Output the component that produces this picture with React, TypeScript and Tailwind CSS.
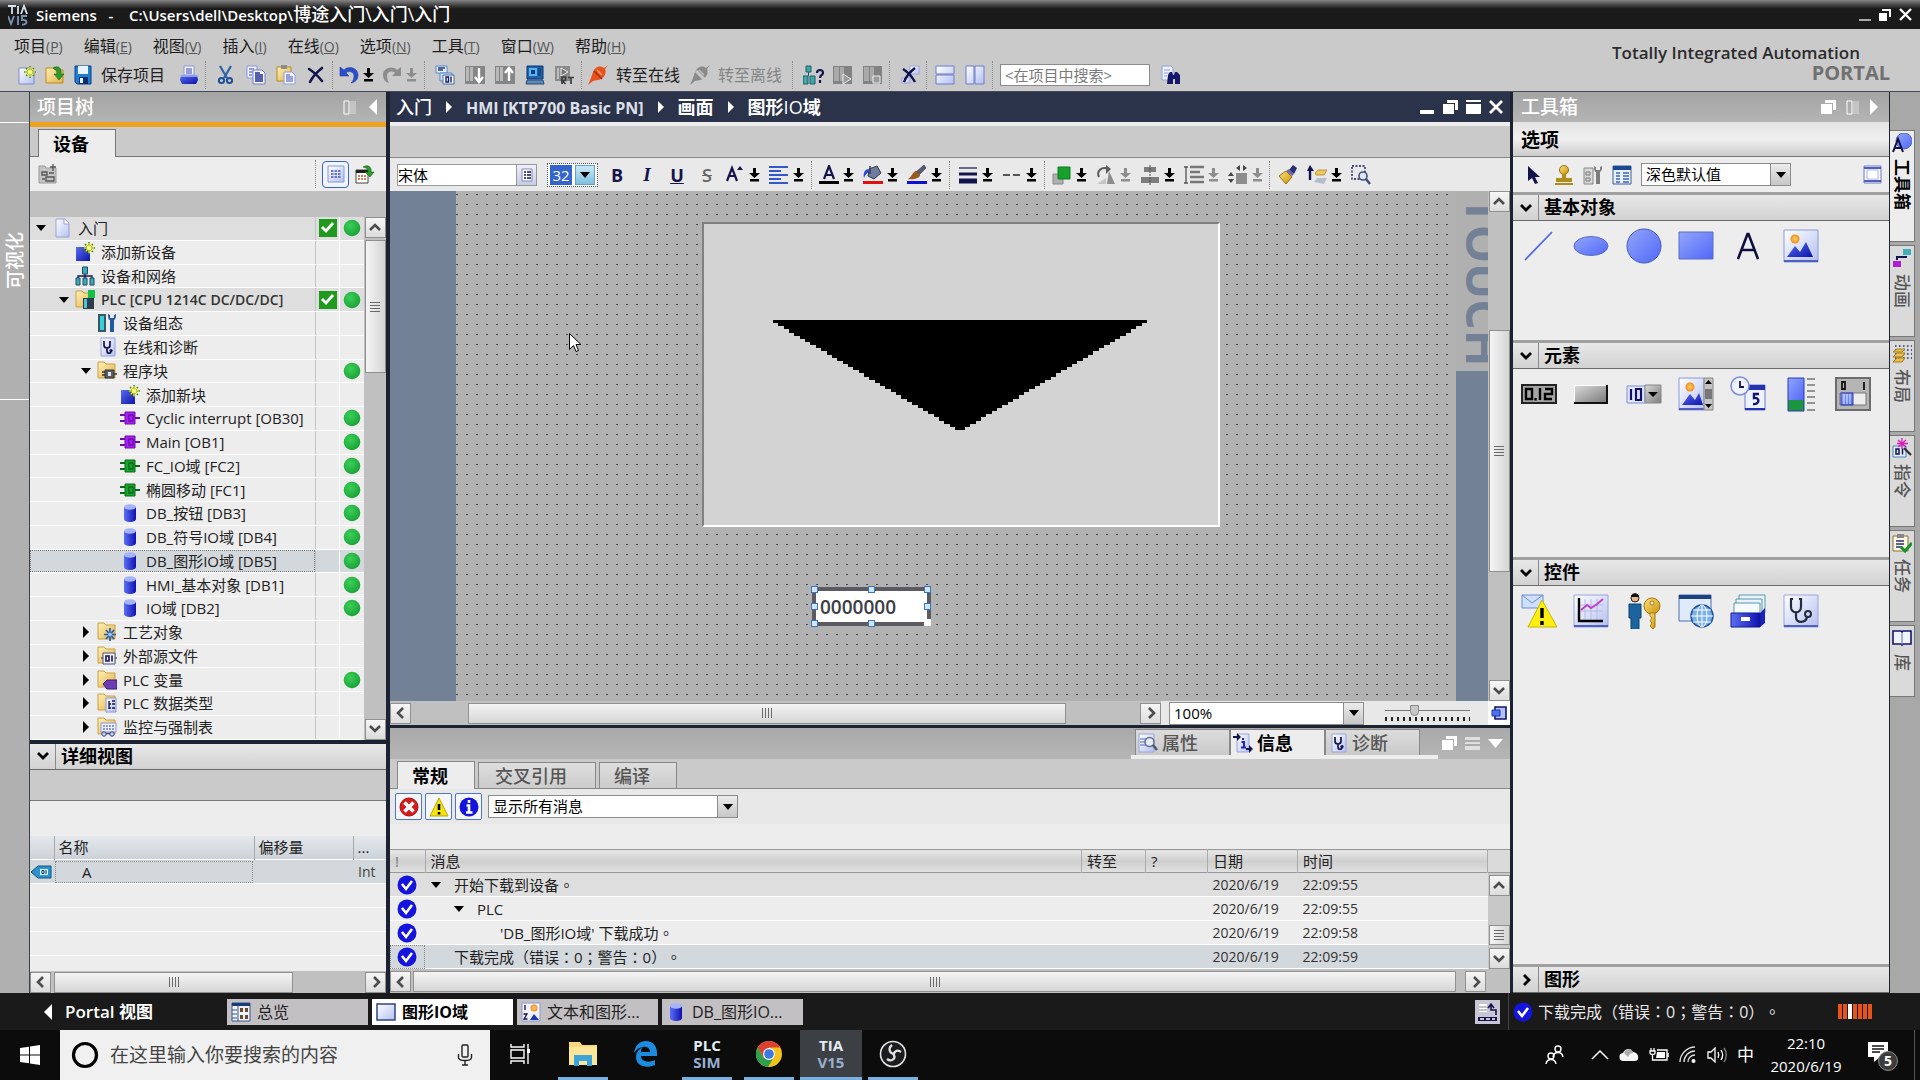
import React from 'react';
import clsx from 'clsx';

type Kids = { children?: React.ReactNode };

/* ---------- drawing helpers ---------- */
const Svg = ({ w = 20, h = 20, vb, children }: Kids & { w?: number; h?: number; vb?: string }) => (
  <svg width={w} height={h} viewBox={vb ?? `0 0 ${w} ${h}`} fill="none" className="block shrink-0" aria-hidden="true">
    {children}
  </svg>
);

const Defs = () => (
  <svg width="0" height="0" className="absolute" aria-hidden="true">
    <defs>
      <linearGradient id="blue" x1="0" y1="0" x2="1" y2="1"><stop offset="0" stopColor="#94a6fb" /><stop offset="1" stopColor="#5068f8" /></linearGradient>
      <linearGradient id="deep" x1="0" y1="0" x2="1" y2="1"><stop offset="0" stopColor="#5a6cf0" /><stop offset="1" stopColor="#0c14a8" /></linearGradient>
      <linearGradient id="pale" x1="0" y1="0" x2="1" y2="1"><stop offset="0" stopColor="#ffffff" /><stop offset="1" stopColor="#b4c0f0" /></linearGradient>
      <linearGradient id="folder" x1="0" y1="0" x2="1" y2="1"><stop offset="0" stopColor="#fff0b8" /><stop offset="1" stopColor="#e2b24a" /></linearGradient>
      <linearGradient id="metal" x1="0" y1="0" x2="1" y2="1"><stop offset="0" stopColor="#d8d8d8" /><stop offset="1" stopColor="#7c7c7c" /></linearGradient>
      <linearGradient id="cyl" x1="0" y1="0" x2="1" y2="0"><stop offset="0" stopColor="#5a70f4" /><stop offset="1" stopColor="#1010b0" /></linearGradient>
      <linearGradient id="gold" x1="0" y1="0" x2="1" y2="1"><stop offset="0" stopColor="#ffe27a" /><stop offset="1" stopColor="#c8920c" /></linearGradient>
      <radialGradient id="green" cx="0.4" cy="0.35" r="0.7"><stop offset="0" stopColor="#3ccf58" /><stop offset="1" stopColor="#17a035" /></radialGradient>
      <radialGradient id="sun"><stop offset="0" stopColor="#ffd27a" /><stop offset="1" stopColor="#f08c14" /></radialGradient>
    </defs>
  </svg>
);

const Star = ({ x, y }: { x: number; y: number }) => (
  <g transform={`translate(${x} ${y})`}>
    <path d="M0-6V6M-6 0H6M-4-4L4 4M-4 4L4-4" stroke="#5c8a10" strokeWidth="1.6" />
    <path d="M0-5V5M-5 0H5M-3-3L3 3M-3 3L3-3" stroke="#f4f83a" strokeWidth="1.1" />
    <circle r="1.8" fill="#fbff9a" />
  </g>
);

/* ---------- main toolbar icons ---------- */
const NewIcon = () => (<Svg><path d="M2 3h11l4 4v12H2z" fill="url(#pale)" stroke="#7c8cd0" /><Star x={13} y={7} /></Svg>);
const OpenIcon = () => (<Svg><path d="M1 3h7l2 2h8v13H1z" fill="url(#folder)" stroke="#c08a20" /><path d="M8 3c5-3 9 0 8 6h3l-5 6-5-6h3c0-3-1-5-4-6z" fill="#2f9a2c" stroke="#17601a" strokeWidth=".6" /></Svg>);
const SaveIcon = () => (<Svg><path d="M2 1h16v18H4l-2-2z" fill="#1c7fd2" stroke="#0a3f86" /><path d="M5 1h10v8H5z" fill="#eaf4fd" /><path d="M6 12h9v7H6z" fill="#0a2f66" /><path d="M7 13h3v5H7z" fill="#e8f0fa" /></Svg>);
const PrintIcon = () => (<Svg><path d="M5 1h10v9H5z" fill="#f4f6ff" stroke="#8a96d8" /><path d="M7 4h6M7 6h6M7 8h6" stroke="#3c46a8" /><path d="M2 10h16l1 5-2 4H3l-2-4z" fill="url(#deep)" /><path d="M2 11h16" stroke="#a9b4fb" strokeWidth="1.5" /></Svg>);
const CutIcon = () => (<Svg><path d="M4 1l7 12M15 1L8 13" stroke="#2b62a8" strokeWidth="2.2" /><circle cx="5.500" cy="15.500" r="2.600" stroke="#1d4f98" strokeWidth="2" /><circle cx="13.500" cy="15.500" r="2.600" stroke="#1d4f98" strokeWidth="2" /></Svg>);
const CopyIcon = () => (<Svg><path d="M1 1h10v12H1z" fill="#eef1ff" stroke="#8d9be0" /><path d="M3 4h5M3 7h5M3 10h3" stroke="#3d4ab4" /><path d="M7 5h9l3 3v11H7z" fill="#f5f7ff" stroke="#6c7cd0" /><path d="M9 8h5M9 10h8M9 12h8M9 14h8M9 16h8" stroke="#232c90" strokeWidth="1.300" /></Svg>);
const PasteIcon = () => (<Svg><path d="M1 2h14v14H1z" fill="url(#folder)" stroke="#b98a1c" /><path d="M5 0h6v4H5z" fill="#8d8d8d" /><path d="M8 7h8l3 3v9H8z" fill="#f5f7ff" stroke="#8d9be0" /><path d="M10 10h4M10 12h7M10 14h7M10 16h7" stroke="#3d4ab4" /></Svg>);
const CrossIcon = () => (<Svg><path d="M3 4c5 3 9 7 13 12M16 3C11 7 7 11 4 17" stroke="#14144c" strokeWidth="2.6" strokeLinecap="round" /></Svg>);
const UndoIcon = () => (<Svg><path d="M1 2v9h9L7 8c3-3 8-1 8 3 0 3-1 5-3 7 5-1 7-4 7-8 0-7-9-10-14-5z" fill="#2a50cc" stroke="#1a2f90" strokeWidth=".5" /></Svg>);
const RedoIcon = () => (<Svg><path d="M19 2v9h-9l3-3C10 5 5 7 5 11c0 3 1 5 2 7C3 17 1 14 1 10 1 3 10 0 15 5z" fill="#8d8d8d" /></Svg>);
const DropArrow = ({ off }: { off?: boolean }) => (
  <Svg w={11} h={14}><path d="M4 0h3v5h4L5.500 10 0 5h4zM1 11h9v2.500H1z" fill={off ? '#8e8e8e' : '#000'} /></Svg>
);
const CompileIcon = () => (<Svg><path d="M1 1h11v7H1z" fill="#e8f0ff" stroke="#5c86c8" /><path d="M3 3h7M3 5h5" stroke="#1c3c80" strokeWidth="1.500" /><path d="M5 8h12v8H5z" fill="#cfe0f8" stroke="#5c86c8" /><path d="M8 10h11v9H8z" fill="#fff" stroke="#3c6ab0" /><path d="M11 12h2.500v5H11zM16 11.500v6" stroke="#111a60" strokeWidth="1.400" /></Svg>);
const LoadIcon = ({ up }: { up?: boolean }) => (
  <Svg><path d="M0 1h20v18H0z" fill="#858585" /><path d="M1 2h3v14H1zM5 2h3v14H5z" fill="#b9b9b9" /><path d="M14 3v13" stroke="#fff" strokeWidth="2.400" /><path d={up ? 'M10 8l4-5 4 5' : 'M10 12l4 5 4-5'} stroke="#fff" strokeWidth="2.400" /></Svg>
);
const PcIcon = () => (<Svg><path d="M2 1h16v13H2z" fill="#1d62b0" stroke="#0b3568" /><path d="M4 3h8v8H4z" fill="#5bb4ee" /><path d="M13 3h3v8h-3z" fill="#134a88" /><path d="M6 5h4v4H6z" fill="#0e3a78" /><path d="M2 15h16l1 4H1z" fill="#5c88b8" stroke="#274d78" /></Svg>);
const RtIcon = () => (<Svg><path d="M0 1h15v15H0z" fill="#8b8b8b" /><path d="M2 3h2v11H2z" fill="#bdbdbd" /><path d="M6 3l7 4-7 4z" fill="#777" stroke="#ededed" /><path d="M7 19v-7h3.500v3.500H7l3.500 3.500M13 12.500h6M16 12v7" stroke="#3c3c3c" strokeWidth="1.700" /></Svg>);
const PlugIcon = ({ off }: { off?: boolean }) => (
  <Svg><path d="M20 0l-4 3c-4-3-9-1-11 4l-2 6-3 7 5-4 5-1c6-1 9-7 7-11z" fill={off ? '#8a8a8a' : '#e8501c'} /><path d="M6 6l8 8" stroke={off ? '#c9c9c9' : '#a42c08'} strokeWidth={off ? 3 : 1.400} /><path d="M9 5l5 5" stroke={off ? '#bdbdbd' : '#ff9a6a'} strokeWidth="1.500" /></Svg>
);
const NetHelpIcon = () => (<Svg w={22}><path d="M3 1h5v6H3zM0 11h5v8H0zM7 11h5v8H7z" fill="#3fa7a4" stroke="#1c5c6c" /><path d="M5.500 7v4" stroke="#1c5c6c" /><path d="M14 8c0-4 6-4 6 0 0 2-3 2-3 5M17 15v3" stroke="#14144c" strokeWidth="2.200" /></Svg>);
const CpuIcon = ({ stop }: { stop?: boolean }) => (
  <Svg><path d="M0 1h19v18H0z" fill="#828282" /><path d="M1 2h5v14H1zM7 2h4v14H7z" fill="#a9a9a9" />{stop ? <path d="M10 11h7v7h-7z" fill="#9a9a9a" stroke="#eee" /> : <path d="M10 9l8 5-8 5z" fill="#9a9a9a" stroke="#eee" />}</Svg>
);
const XrefIcon = () => (<Svg><path d="M10 1h9v8h-9z" fill="url(#pale)" stroke="#9aa6dc" /><path d="M2 13h8v5H2z" fill="url(#pale)" stroke="#9aa6dc" /><path d="M3 4c5 3 8 6 12 13M15 3C10 7 6 11 4 17" stroke="#0e0e50" strokeWidth="2.400" /></Svg>);
const SplitIcon = ({ v }: { v?: boolean }) => (
  <Svg><path d={v ? 'M1 1h8v18H1zM10 1h9v18h-9z' : 'M1 1h18v8H1zM1 10h18v9H1z'} fill="url(#pale)" stroke="#6c7cc8" /></Svg>
);
const FindIcon = () => (<Svg><path d="M1 1h9l2 2v12H1z" fill="#eef2ff" stroke="#8fa2dd" /><path d="M3 5h6M3 8h5M3 11h3" stroke="#8fa2dd" /><path d="M7 10l2-3h2l1 3h1l1-3h2l3 3v9h-5v-5h-2v5H6z" fill="#17176a" /></Svg>);

/* ---------- format toolbar icons ---------- */
const AlignIcon = () => (<Svg><path d="M0 2h19M0 6h12M0 10h19M0 14h12M0 18h19" stroke="#3458c8" strokeWidth="2.200" /></Svg>);
const FontColorIcon = () => (<Svg><path d="M5 14L10 1l5 13M7 10h6" stroke="#14144c" strokeWidth="2.200" /><path d="M0 16h20v3H0z" fill="#000" /></Svg>);
const GrowIcon = () => (<Svg><path d="M2 16L7 3l5 13M4 11h6" stroke="#14144c" strokeWidth="2.200" /><path d="M12 5l3-4 3 4z" fill="#14144c" /></Svg>);
const FillIcon = () => (<Svg><path d="M6 4l8-3 4 7-7 6-6-3z" fill="#6f7c9c" stroke="#2c3654" /><path d="M7 1v8" stroke="#2c3654" strokeWidth="1.400" /><path d="M5 4c-4 1-5 5-4 9 1-3 3-5 5-6z" fill="#2a4cd0" /><path d="M0 16h20v3H0z" fill="#e01010" /></Svg>);
const BrushIcon = () => (<Svg><path d="M17 0l2 3-7 7-3-3z" fill="#5a5a6e" stroke="#2c2c40" strokeWidth=".6" /><path d="M9 6l4 4c0 3-6 5-12 4 4-2 4-7 8-8z" fill="#9a5a20" /><path d="M0 16h20v3H0z" fill="#1010d0" /></Svg>);
const LineWIcon = () => (<Svg><path d="M1 3h18" stroke="#14144c" strokeWidth="1.200" /><path d="M1 9h18" stroke="#14144c" strokeWidth="3" /><path d="M1 16h18" stroke="#14144c" strokeWidth="5" /></Svg>);
const DashIcon = () => (<Svg><path d="M1 10h7M11 10h7" stroke="#555" strokeWidth="2.200" /></Svg>);
const LayerIcon = () => (<Svg><path d="M1 9h10v10H1z" fill="#b0b0b0" stroke="#888" /><path d="M6 2h12v12H6z" fill="#17a02c" stroke="#0f7a20" /></Svg>);
const RotateIcon = () => (<Svg><path d="M3 12c-3-6 3-11 9-8" stroke="#5c5c5c" strokeWidth="2" /><path d="M10 0l5 4-5 5z" fill="#5c5c5c" /><path d="M13 6l6 13h-8z" fill="#8c8c8c" /><path d="M10 13v6H1z" fill="#c4c4c4" /></Svg>);
const AlignVIcon = () => (<Svg><path d="M4 2h12v5H4zM1 12h18v6H1z" fill="#7d7d7d" /><path d="M10 0v20" stroke="#444" strokeDasharray="2 1" /></Svg>);
const SpaceIcon = () => (<Svg><path d="M6 2h14M6 7h10M6 12h14M6 17h14" stroke="#777" strokeWidth="2.600" /><path d="M2 2v16M0 2h4M0 18h4" stroke="#555" strokeWidth="1.300" /></Svg>);
const SizeIcon = () => (<Svg><path d="M8 8h11v11H8z" fill="#8d8d8d" /><path d="M12 0v6L8 3zM15 0v6l4-3zM0 11h6L3 7zM0 14h6l-3 4z" fill="#444" /></Svg>);
const PainterIcon = () => (<Svg><path d="M15 0l4 3-3 6-5-4z" fill="#2c2c74" /><path d="M11 4l5 5-2 2-6-5z" fill="#6a6ab0" /><path d="M8 6l6 6-6 7-7-8z" fill="url(#gold)" stroke="#a46e08" /></Svg>);
const OrderIcon = () => (<Svg><path d="M3 15V4" stroke="#14144c" strokeWidth="2.400" /><path d="M0 6l3-6 4 6z" fill="#14144c" /><path d="M8 8l3-3h9l-3 5H9z" fill="#f0c860" stroke="#a47c18" strokeWidth=".7" /><path d="M7 17l3-4h10l-3 6z" fill="#b5bccb" /></Svg>);
const ZoomSelIcon = () => (<Svg><path d="M1 1h13v13H1z" stroke="#14144c" strokeWidth="1.300" strokeDasharray="2 1.500" /><circle cx="12" cy="11" r="4" fill="#dce8f8" stroke="#44507a" strokeWidth="1.600" /><path d="M15 14l4 5" stroke="#44507a" strokeWidth="2.600" /></Svg>);

/* ---------- tree icons ---------- */
const DocIcon = () => (<Svg><path d="M4 1h9l4 4v14H4z" fill="url(#pale)" stroke="#97a3d8" /><path d="M12 1v5h5" stroke="#97a3d8" fill="#fff" /></Svg>);
const AddIcon = () => (<Svg><path d="M1 5h14v14H1z" fill="url(#deep)" /><Star x={14} y={6} /></Svg>);
const NetIcon = () => (<Svg><path d="M10 6v7M3 13V10h14v3" stroke="#14144c" strokeWidth="1.300" /><path d="M7.500 1h5v7h-5zM1 12h4v7H1zM8 12h4v7H8zM15 12h4v7h-4z" fill="#3fa9b8" stroke="#1c4c60" /></Svg>);
const FolderBase = () => <path d="M1 1h6l2 2h9v14H1z" fill="url(#folder)" stroke="#c9a040" />;
const PlcIcon = () => (<Svg><FolderBase /><path d="M8 8h11v11H8z" fill="#2c3c4c" /><path d="M9 9h3v9H9z" fill="#4fc4d4" /><path d="M13 0h7v8h-7z" fill="#12c04a" /></Svg>);
const ConfigIcon = () => (<Svg><path d="M1 1h8v18H1z" fill="#3c5664" /><path d="M3 3h4v14H3z" fill="#35d0d8" /><path d="M11 1c0 5 1 6 2 6v12h4V7c2-1 2-4 2-6l-2 1v3h-4V2z" fill="#2458a4" /></Svg>);
const DiagIcon = () => (<Svg><path d="M4 1h14v18H4z" fill="url(#pale)" stroke="#9aa6dc" /><path d="M7 4v4c0 4 6 4 6 0V4M10 11v3c0 3 4 3 4 0" stroke="#14144c" strokeWidth="1.700" /><circle cx="14" cy="13.500" r="1.600" fill="#14144c" /></Svg>);
const BlocksIcon = () => (<Svg><FolderBase /><path d="M8 9h9v8H8z" fill="#565e68" stroke="#333" /><path d="M5 11h3M5 14h3M17 13h3" stroke="#333" strokeWidth="1.600" /><path d="M11 11h3v4h-3z" fill="#e4e4e4" /></Svg>);
const BlockIcon = ({ c, d }: { c: string; d: string }) => (
  <Svg><path d="M5 4h10v12H5z" fill={c} stroke={d} /><path d="M0 7h5M0 13h5M15 10h5" stroke={d} strokeWidth="2" /><path d="M9 7h4v6H9z" stroke={d} strokeWidth="1.300" /></Svg>
);
const ObIcon = () => <BlockIcon c="#a81ef0" d="#6a0ca8" />;
const FcIcon = () => <BlockIcon c="#18a42c" d="#0b6a1a" />;
const DbIcon = () => (<Svg><path d="M4 4v12c0 4 12 4 12 0V4z" fill="url(#cyl)" /><ellipse cx="10" cy="4" rx="6" ry="2.800" fill="#a5b4fb" /></Svg>);
const TechIcon = () => (<Svg><FolderBase /><path d="M13 6v13M7 12.500h12M9 8l8 9M17 8l-8 9" stroke="#1c5cb8" strokeWidth="1.700" /><circle cx="13" cy="12.500" r="2" fill="#9cc4f4" /></Svg>);
const SourceIcon = () => (<Svg><FolderBase /><path d="M6 7h12v11H6z" fill="#eef0ff" stroke="#4c5470" /><path d="M4 12h2M18 12h2" stroke="#333" /><path d="M9 10h3v5H9zM15 9.500v6" stroke="#14144c" strokeWidth="1.600" /></Svg>);
const TagsIcon = () => (<Svg><FolderBase /><path d="M6 14l4-4h10v9H10z" fill="#6c3cb4" stroke="#3c1c74" /></Svg>);
const TypesIcon = () => (<Svg><FolderBase /><path d="M9 5h10v14H9z" fill="url(#pale)" stroke="#8a96d0" /><path d="M12 8v8M12 11h2M15 8h3M15 11h3M12 15h2M15 15h3" stroke="#14144c" strokeWidth="1.300" /></Svg>);
const WatchIcon = () => (<Svg><FolderBase /><path d="M4 6h15v9H4z" fill="#eef0ff" stroke="#8a96d0" /><path d="M6 9h11M6 12h11" stroke="#6c7cc0" strokeDasharray="2 1" strokeWidth="1.500" /><circle cx="7" cy="17" r="2.200" fill="#ccd8f8" stroke="#2c3c90" /><circle cx="15" cy="17" r="2.200" fill="#ccd8f8" stroke="#2c3c90" /><path d="M9 16.500h4" stroke="#2c3c90" /></Svg>);
const TickBox = () => (<Svg w={18} h={18}><path d="M0 0h18v18H0z" fill="#1f9a1f" /><path d="M3 8l4 4 7-8" stroke="#fff" strokeWidth="2.800" /></Svg>);
const GreenDot = () => (<Svg w={18} h={18}><circle cx="9" cy="9" r="8.300" fill="url(#green)" /></Svg>);

/* ---------- message icons ---------- */
const CheckIcon = () => (<Svg><circle cx="10" cy="10" r="9.500" fill="#1414dc" /><path d="M5 9l4 5 6-8" stroke="#fff" strokeWidth="2.600" /></Svg>);
const ErrIcon = () => (<Svg><circle cx="10" cy="10" r="9" fill="#d41c1c" stroke="#a80c0c" /><path d="M5.500 5.500l9 9M14.500 5.500l-9 9" stroke="#fff" strokeWidth="3.600" /></Svg>);
const WarnIcon = () => (<Svg><path d="M10 1l9 18H1z" fill="#f4e414" stroke="#b8a800" /><path d="M10 7v6M10 15v2.500" stroke="#000" strokeWidth="2.600" /></Svg>);
const InfoIcon = () => (<Svg><circle cx="10" cy="10" r="9.500" fill="#1414dc" /><path d="M10 3v3M7.500 8.500H10V15M7 15.500h6.500" stroke="#fff" strokeWidth="2.600" /></Svg>);
const PropIcon = () => (<Svg><path d="M1 1h15v18H1z" fill="url(#pale)" stroke="#9aa6dc" /><path d="M2 6h8M2 9h6M2 12h8" stroke="#5c6cc0" /><circle cx="11.500" cy="9" r="4.500" fill="#e4ecf8" stroke="#666e88" strokeWidth="1.500" /><path d="M15 12l4 5" stroke="#4c5470" strokeWidth="2.500" /></Svg>);
const InfoDocIcon = () => (<Svg><path d="M4 1h12v18H4z" fill="url(#pale)" stroke="#9aa6dc" /><path d="M0 4h5M13 16h5" stroke="#14144c" strokeWidth="2" /><path d="M4 0l4 4-4 4zM16 12l4 4-4 4z" fill="#14144c" /><path d="M10 5v2M8.500 9H11v5M8 14.500h5" stroke="#2424b0" strokeWidth="2" /></Svg>);

/* ---------- toolbox icons ---------- */
const ToolSvg = ({ children }: Kids) => <Svg w={36} h={36}>{children}</Svg>;
const Landscape = ({ w = 34 }: { w?: number }) => (
  <>
    <path d={`M1 2h${w}v32H1z`} fill="url(#pale)" stroke="#8a9ad8" />
    <circle cx="12" cy="11" r="4.500" fill="url(#sun)" />
    <path d={`M4 29l8-11 5 6 ${w > 30 ? '6-10 7 15' : '4-7 4 12'}z`} fill="url(#deep)" />
    <path d={`M1 33h${w}`} stroke="#5060c0" strokeWidth="2" />
  </>
);
const shapes: { name: string; art: React.ReactNode }[] = [
  { name: '线', art: <ToolSvg><path d="M4 32L31 4" stroke="#5468e0" strokeWidth="1.800" /></ToolSvg> },
  { name: '椭圆', art: <ToolSvg><ellipse cx="18" cy="18" rx="17" ry="9.500" fill="url(#blue)" stroke="#5a6cc0" /></ToolSvg> },
  { name: '圆', art: <ToolSvg><circle cx="18" cy="18" r="17" fill="url(#blue)" stroke="#4458b8" /></ToolSvg> },
  { name: '矩形', art: <ToolSvg><path d="M1 4h34v27H1z" fill="url(#blue)" stroke="#5a6cc0" /></ToolSvg> },
  { name: '文本域', art: <ToolSvg><path d="M8 31L17.500 6h1L28 31M12 22h12" stroke="#101040" strokeWidth="2.600" /></ToolSvg> },
  { name: '图形视图', art: <ToolSvg><Landscape /></ToolSvg> },
];
const elements: { name: string; art: React.ReactNode }[] = [
  { name: 'I/O 域', art: <ToolSvg><path d="M1 9h34v18H1z" fill="#a4a4a4" stroke="#222" strokeWidth="2" /><path d="M5 13h6v10H5zM14.500 22v2.500M19 12v12M24 13h7v5h-7v5h7" stroke="#000" strokeWidth="2.400" /></ToolSvg> },
  { name: '按钮', art: <ToolSvg><path d="M1 9h34v19H1z" fill="#111" /><path d="M1 9h32v17H1z" fill="#fff" /><path d="M2 10h31v16H2z" fill="url(#metal)" /></ToolSvg> },
  { name: '符号 I/O 域', art: <ToolSvg><path d="M1 10h18v17H1z" fill="#dfe6ff" stroke="#7c8cd8" /><path d="M5 13v11M10 13h5v11h-5z" stroke="#101068" strokeWidth="2.200" /><path d="M19 9h16v18H19z" fill="url(#metal)" stroke="#888" /><path d="M22 16h10l-5 5z" fill="#000" /></ToolSvg> },
  { name: '图形 I/O 域', art: <ToolSvg><Landscape w={25} /><path d="M26 2h9v32h-9z" fill="#c4c4c4" stroke="#888" /><path d="M27 8l3.500-4L34 8zM27 28l3.500 4 3.500-4z" fill="#000" /><path d="M27 13h7v10h-7z" fill="#777" /></ToolSvg> },
  { name: '日期/时间域', art: <ToolSvg><path d="M15 9h20v25H15z" fill="#eef2ff" stroke="#6c7cd0" /><path d="M15 9h20v5H15zM15 32h20v2H15z" fill="#2434b0" /><path d="M29 18h-5v4c6-1 6 7-1 6" stroke="#14146c" strokeWidth="2.400" /><circle cx="10" cy="10" r="9" fill="#eef2ff" stroke="#7c8cd8" strokeWidth="1.500" /><path d="M10 5v6h4" stroke="#14144c" strokeWidth="1.800" /></ToolSvg> },
  { name: '棒图', art: <ToolSvg><path d="M5 2h16v22H5z" fill="url(#blue)" /><path d="M5 24h16v11H5z" fill="#1c9440" /><path d="M5 2h16v33H5z" stroke="#2c3cb0" /><path d="M24 3h8M24 9h8M24 15h8M24 21h8M24 27h8M24 34h8" stroke="#777" strokeWidth="1.500" /></ToolSvg> },
  { name: '开关', art: <ToolSvg><path d="M1 2h34v32H1z" fill="#b5b5b5" stroke="#6c6c6c" strokeWidth="2" /><path d="M7 6h3v7H7zM29 6v8" stroke="#111" strokeWidth="1.800" /><path d="M5 17h26v12H5z" fill="#eee" stroke="#777" /><path d="M6 17h12v12H6z" fill="url(#blue)" stroke="#2c3cb0" /><path d="M9 18v10M12 18v10M15 18v10" stroke="#e4e8ff" /></ToolSvg> },
];
const controls: { name: string; art: React.ReactNode }[] = [
  { name: '报警视图', art: <ToolSvg><path d="M1 2h21v13H1z" fill="#cfe0fb" stroke="#6c8cd0" /><path d="M1 2l10 8L22 2" stroke="#6c8cd0" /><path d="M21 7l15 27H7z" fill="#fbee10" stroke="#c8b800" /><path d="M21 15v10M21 28v4" stroke="#000" strokeWidth="3.400" /></ToolSvg> },
  { name: '趋势视图', art: <ToolSvg><path d="M1 2h34v32H1z" fill="url(#pale)" stroke="#9aa6dc" /><path d="M12 6v21M18 6v21M24 6v21M7 12h23M7 18h23" stroke="#b4bce4" /><path d="M6 5v23h24" stroke="#000" strokeWidth="2.400" /><path d="M8 17l6-5 4 3 5-3 7-6" stroke="#c040c8" strokeWidth="2" /><path d="M1 33h34" stroke="#5060c0" strokeWidth="2" /></ToolSvg> },
  { name: '用户视图', art: <ToolSvg><circle cx="9" cy="5" r="4" fill="#e8b888" stroke="#222" /><path d="M5 4c0-5 8-5 8 0z" fill="#111" /><path d="M3 11h12v14h-2v12H5V25H3z" fill="#1c64a0" stroke="#0c4070" /><circle cx="26" cy="13" r="8" fill="url(#gold)" stroke="#a4780c" /><circle cx="26" cy="10" r="2" fill="#eee" stroke="#a4780c" /><path d="M24 20h5v14l-2 2-3-3 2-3-2-2 2-3-2-2z" fill="url(#gold)" stroke="#a4780c" /></ToolSvg> },
  { name: 'HTML 浏览器', art: <ToolSvg><path d="M1 2h32v26H1z" fill="#dfeafa" stroke="#4c70b0" /><path d="M1 2h32v4H1z" fill="#1c4080" /><circle cx="24" cy="23" r="11" fill="#7cb0e4" stroke="#1c50a0" strokeWidth="1.500" /><path d="M13 23h22M24 12v22M15 17h18M15 29h18" stroke="#fff" /><ellipse cx="24" cy="23" rx="5" ry="11" stroke="#fff" /></ToolSvg> },
  { name: '配方视图', art: <ToolSvg><path d="M9 2h26v18H9z" fill="#e8f4fb" stroke="#5c94a8" /><path d="M6 6h26v16H6z" fill="#e8f4fb" stroke="#5c94a8" /><path d="M4 10h26v14H4z" fill="#f4fafd" stroke="#5c94a8" /><path d="M1 20h29l5-5v15l-5 4H1z" fill="#1c24b8" /><path d="M1 20h29v14H1z" fill="url(#cyl)" stroke="#101890" /><path d="M11 24h9v4h-9z" fill="#fff" /></ToolSvg> },
  { name: '系统诊断视图', art: <ToolSvg><path d="M1 2h34v32H1z" fill="url(#pale)" stroke="#9aa6dc" /><path d="M10 6H8v8c0 7 10 7 10 0V6h-2M13 19v5c0 7 10 6 11 0" stroke="#222c3c" strokeWidth="2.200" /><circle cx="25" cy="21" r="3" stroke="#222c3c" strokeWidth="2" /><path d="M1 33h34" stroke="#5060c0" strokeWidth="2" /></ToolSvg> },
];

/* ---------- shared controls ---------- */
const IconBtn = ({ label, className, children }: Kids & { label: string; className?: string }) => (
  <button type="button" aria-label={label} className={clsx('flex h-5 shrink-0 items-center justify-center', className)}>{children}</button>
);
const Sep = ({ className }: { className?: string }) => <span className={clsx('h-7 shrink-0 border-l border-dotted border-[#8a8a8a]', className)} />;
const ICON = 'flex items-center gap-[10px]';
const Chev = ({ d }: { d: 'up' | 'down' | 'left' | 'right' }) => {
  const p = { up: 'M2 9l5-5 5 5', down: 'M2 4l5 5 5-5', left: 'M9 2L4 7l5 5', right: 'M5 2l5 5-5 5' }[d];
  return <Svg w={14} h={14}><path d={p} stroke="#4c4c4c" strokeWidth="2.600" /></Svg>;
};
const ScrollBtn = ({ d, label }: { d: 'up' | 'down' | 'left' | 'right'; label: string }) => (
  <button type="button" aria-label={label} className="flex size-[21px] shrink-0 items-center justify-center border border-[#909090] bg-linear-to-b from-[#f6f6f6] to-[#dcdcdc]"><Chev d={d} /></button>
);
const Grip = ({ v }: { v?: boolean }) => (
  <span className={clsx('flex gap-[2px]', v && 'flex-col')}>
    {[0, 1, 2, 3].map((i) => <span key={i} className={clsx('bg-[#6a6a6a]', v ? 'h-px w-[10px]' : 'h-[10px] w-px')} />)}
  </span>
);
const Thumb = ({ v, grip = true, className }: { v?: boolean; grip?: boolean; className: string }) => (
  <div className={clsx('flex shrink-0 items-center justify-center border border-[#909090] from-[#f4f4f4] to-[#d6d6d6]', v ? 'w-[21px] bg-linear-to-r' : 'h-[21px] bg-linear-to-b', className)}>{grip && <Grip v={v} />}</div>
);
const Select = ({ label, value, className, id }: { label: string; value: string; className: string; id: string }) => (
  <div className={clsx('relative flex h-[23px] shrink-0 items-stretch border border-[#8c8c8c] bg-white', className)}>
    <select id={id} aria-label={label} className="min-w-0 flex-1 appearance-none bg-white pl-1 text-[15px] leading-[21px] text-black outline-none"><option>{value}</option></select>
    <span className="pointer-events-none flex w-5 items-center justify-center border-l border-[#8c8c8c] bg-linear-to-b from-[#ececec] to-[#c6c6c6]"><Svg w={10} h={6}><path d="M0 0h10L5 6z" fill="#000" /></Svg></span>
  </div>
);
const PopIcon = () => (<Svg w={15} h={15}><path d="M4 0h11v10h-3V3H4z" fill="#fff" /><path d="M0 4h11v10H0z" fill="#fff" /></Svg>);
const PaneIcon = () => (<Svg w={13} h={15}><path d="M1 1h5v13H1z" stroke="#fff" /><path d="M8 1v13M10 1v13M12 1v13" stroke="#dcdcdc" /></Svg>);
const Tri = ({ d, c = '#000' }: { d: 'down' | 'right' | 'left'; c?: string }) => (
  <Svg w={12} h={12}><path d={d === 'down' ? 'M1 3h10L6 9z' : d === 'right' ? 'M3 0v12l6-6z' : 'M9 0v12L3 6z'} fill={c} /></Svg>
);
const PaneArrow = ({ d }: { d: 'right' | 'left' }) => (
  <Svg w={10} h={16}><path d={d === 'right' ? 'M1 0v16l8-8z' : 'M9 0v16L1 8z'} fill="#fff" /></Svg>
);

/* ---------- top of window ---------- */
const TitleBar = () => (
  <header className="flex h-[29px] shrink-0 items-center bg-linear-to-b from-[#858585] via-[#1a1a1a] via-30% to-[#1a1a1a] pl-2 pr-2 text-white">
    <Svg w={20} h={22}><path d="M0 2h8M4 2v8M10 2v8M13 10l3-8 3 8" stroke="#d8e0ec" strokeWidth="1.800" /><path d="M0 12l3 8 3-8M10 12v9M19 12h-5v4c6-1 6 5 0 4.500" stroke="#7c94b8" strokeWidth="1.800" /></Svg>
    <h1 className="ml-2 whitespace-pre text-[15px] font-semibold leading-5">{'Siemens   -    C:\\Users\\dell\\Desktop\\'}<span className="text-[18px] font-medium">博途入门\入门\入门</span></h1>
    <div className="ml-auto flex items-center gap-2">
      <IconBtn label="最小化"><Svg w={12} h={12}><path d="M0 11h12" stroke="#ddd" strokeWidth="1.500" /></Svg></IconBtn>
      <IconBtn label="还原"><Svg w={12} h={12}><path d="M3 0h9v8h-2V2H3z" fill="#fff" /><path d="M0 4h8v8H0z" fill="#fff" /></Svg></IconBtn>
      <IconBtn label="关闭"><Svg w={13} h={13}><path d="M1 1l11 11M12 1L1 12" stroke="#fff" strokeWidth="2.400" /></Svg></IconBtn>
    </div>
  </header>
);

const menus: [string, string][] = [['项目', 'P'], ['编辑', 'E'], ['视图', 'V'], ['插入', 'I'], ['在线', 'O'], ['选项', 'N'], ['工具', 'T'], ['窗口', 'W'], ['帮助', 'H']];

const MenuBar = () => (
  <nav className="flex h-[31px] items-center gap-[21px] pl-[14px] pt-1 text-[16px] leading-5 text-[#1c1c1c]">
    {menus.map(([t, k]) => <button key={t} type="button">{t}<span className="text-[14px] text-[#555]">(<u>{k}</u>)</span></button>)}
  </nav>
);

const MainToolbar = () => (
  <div className="flex h-[29px] items-center pl-[17px] text-[16px] leading-5 text-[#222]">
    <div className="flex items-center gap-2">
      <IconBtn label="新建"><NewIcon /></IconBtn><IconBtn label="打开"><OpenIcon /></IconBtn><IconBtn label="保存项目"><SaveIcon /></IconBtn>
      <button type="button">保存项目</button>
    </div>
    <IconBtn label="打印" className="ml-[14px]"><PrintIcon /></IconBtn>
    <Sep className="ml-[6px] mr-[10px]" />
    <div className={ICON}><IconBtn label="剪切"><CutIcon /></IconBtn><IconBtn label="复制"><CopyIcon /></IconBtn><IconBtn label="粘贴"><PasteIcon /></IconBtn><IconBtn label="删除"><CrossIcon /></IconBtn></div>
    <Sep className="mx-[6px]" />
    <div className="flex items-center gap-1"><IconBtn label="撤销"><UndoIcon /></IconBtn><IconBtn label="撤销列表"><DropArrow /></IconBtn><IconBtn label="重做" className="ml-1"><RedoIcon /></IconBtn><IconBtn label="重做列表"><DropArrow off /></IconBtn></div>
    <Sep className="ml-[7px] mr-[10px]" />
    <div className={ICON}><IconBtn label="编译"><CompileIcon /></IconBtn><IconBtn label="下载"><LoadIcon /></IconBtn><IconBtn label="上传"><LoadIcon up /></IconBtn><IconBtn label="仿真"><PcIcon /></IconBtn><IconBtn label="运行"><RtIcon /></IconBtn></div>
    <Sep className="mx-[6px]" />
    <button type="button" className="flex items-center gap-2"><PlugIcon />转至在线</button>
    <button type="button" className="ml-[10px] flex items-center gap-2 text-[#858585]"><PlugIcon off />转至离线</button>
    <Sep className="mx-[10px]" />
    <div className="flex items-center gap-2"><IconBtn label="可访问的设备"><NetHelpIcon /></IconBtn><IconBtn label="启动 CPU"><CpuIcon /></IconBtn><IconBtn label="停止 CPU" className="ml-[2px]"><CpuIcon stop /></IconBtn></div>
    <Sep className="ml-[6px] mr-[10px]" />
    <IconBtn label="交叉引用"><XrefIcon /></IconBtn>
    <Sep className="ml-[6px] mr-2" />
    <div className={ICON}><IconBtn label="水平拆分"><SplitIcon /></IconBtn><IconBtn label="垂直拆分"><SplitIcon v /></IconBtn></div>
    <Sep className="ml-[7px] mr-[7px]" />
    <input aria-label="在项目中搜索" placeholder="<在项目中搜索>" className="h-[22px] w-[150px] shrink-0 border border-[#8c8c8c] bg-white px-1 text-[15px] leading-5 outline-none placeholder:text-[#7a7a7a]" />
    <IconBtn label="查找" className="ml-[11px]"><FindIcon /></IconBtn>
  </div>
);

/* ---------- left pane ---------- */
type Row = { lv: 0 | 1 | 2 | 3; icon: React.ReactNode; t: string; open?: boolean; closed?: boolean; tick?: boolean; dot?: boolean; kind?: 'head' | 'sel'; strong?: boolean };
const rows: Row[] = [
  { lv: 0, icon: <DocIcon />, t: '入门', open: true, tick: true, dot: true, kind: 'head' },
  { lv: 1, icon: <AddIcon />, t: '添加新设备' },
  { lv: 1, icon: <NetIcon />, t: '设备和网络' },
  { lv: 1, icon: <PlcIcon />, t: 'PLC [CPU 1214C DC/DC/DC]', open: true, tick: true, dot: true, kind: 'head', strong: true },
  { lv: 2, icon: <ConfigIcon />, t: '设备组态' },
  { lv: 2, icon: <DiagIcon />, t: '在线和诊断' },
  { lv: 2, icon: <BlocksIcon />, t: '程序块', open: true, dot: true },
  { lv: 3, icon: <AddIcon />, t: '添加新块' },
  { lv: 3, icon: <ObIcon />, t: 'Cyclic interrupt [OB30]', dot: true },
  { lv: 3, icon: <ObIcon />, t: 'Main [OB1]', dot: true },
  { lv: 3, icon: <FcIcon />, t: 'FC_IO域 [FC2]', dot: true },
  { lv: 3, icon: <FcIcon />, t: '椭圆移动 [FC1]', dot: true },
  { lv: 3, icon: <DbIcon />, t: 'DB_按钮 [DB3]', dot: true },
  { lv: 3, icon: <DbIcon />, t: 'DB_符号IO域 [DB4]', dot: true },
  { lv: 3, icon: <DbIcon />, t: 'DB_图形IO域 [DB5]', dot: true, kind: 'sel' },
  { lv: 3, icon: <DbIcon />, t: 'HMI_基本对象 [DB1]', dot: true },
  { lv: 3, icon: <DbIcon />, t: 'IO域 [DB2]', dot: true },
  { lv: 2, icon: <TechIcon />, t: '工艺对象', closed: true },
  { lv: 2, icon: <SourceIcon />, t: '外部源文件', closed: true },
  { lv: 2, icon: <TagsIcon />, t: 'PLC 变量', closed: true, dot: true },
  { lv: 2, icon: <TypesIcon />, t: 'PLC 数据类型', closed: true },
  { lv: 2, icon: <WatchIcon />, t: '监控与强制表', closed: true },
];
const indent = ['pl-[5px]', 'pl-[28px]', 'pl-[50px]', 'pl-[73px]'];

const Tree = () => (
  <div className="flex min-h-0 flex-1">
    <ul role="tree" aria-label="项目树" className="flex min-w-0 flex-1 flex-col">
      {rows.map((r) => (
        <li key={r.t} role="treeitem" className={clsx('flex min-h-0 flex-1 border-b border-white', r.kind === 'head' ? 'bg-[#dedede]' : r.kind === 'sel' ? 'bg-[#d3d8dc]' : 'bg-[#ededed]')}>
          <div className={clsx('flex flex-1 items-center overflow-hidden whitespace-nowrap', indent[r.lv], r.kind === 'sel' && 'outline-1 -outline-offset-1 outline-dotted outline-[#777]')}>
            <span className="w-[17px] shrink-0">{r.open && <Tri d="down" />}{r.closed && <Tri d="right" />}</span>
            {r.icon}
            <span className={clsx('ml-[6px] leading-5', r.strong ? 'text-[14px] font-semibold text-[#333]' : 'text-[15px] text-[#222]')}>{r.t}</span>
          </div>
          <div className="flex w-[25px] items-center justify-center border-x border-l-[#c4c4c4] border-r-white">{r.tick && <TickBox />}</div>
          <div className="flex w-[24px] items-center justify-center pr-px">{r.dot && <GreenDot />}</div>
        </li>
      ))}
    </ul>
    <div className="flex w-[22px] flex-col items-center gap-px bg-[#c0c0c0]">
      <ScrollBtn d="up" label="向上滚动" />
      <Thumb v className="mt-px h-[133px]" />
      <div className="mt-auto"><ScrollBtn d="down" label="向下滚动" /></div>
    </div>
  </div>
);

const SectionHead = ({ title, closed }: { title: string; closed?: boolean }) => (
  <button type="button" className="flex h-[26px] w-full shrink-0 items-stretch border-b border-[#6a6a6a] bg-linear-to-b from-[#e8e8e8] to-[#d2d2d2] text-left text-[18px] font-bold leading-6 text-black">
    <span className="flex w-[26px] items-center justify-center border-r border-[#8a8a8a]">
      <Svg w={14} h={14}><path d={closed ? 'M5 2l5 5-5 5' : 'M2 4l5 5 5-5'} stroke="#000" strokeWidth="2.800" /></Svg>
    </span>
    <span className="pl-[5px]">{title}</span>
  </button>
);

const LeftPane = () => (
  <aside className="flex w-[356px] shrink-0 flex-col bg-[#cacaca]">
    <div className="flex h-[30px] shrink-0 items-center bg-linear-to-b from-[#a4a4a4] to-[#b4b4b4] pl-[7px] pr-2 text-[19px] font-medium leading-6 text-white">
      <h2>项目树</h2><div className="ml-auto flex items-center gap-3"><PaneIcon /><PaneArrow d="left" /></div>
    </div>
    <div className="h-[5px] shrink-0 bg-[#eda31f]" />
    <div className="flex h-[30px] shrink-0 items-end border-b border-[#777] pl-2">
      <button type="button" className="-mb-px h-7 w-[78px] border border-b-0 border-[#777] bg-[#ededed] pr-3 text-[18px] font-bold leading-6 text-black">设备</button>
    </div>
    <div className="flex h-[34px] shrink-0 items-center bg-[#ededed] pl-2 pr-[11px]">
      <IconBtn label="新建组"><Svg><path d="M1 2h6l1 2h10v15H1z" fill="#c4c4c4" stroke="#9a9a9a" /><path d="M4 8h5v3H4zM11 9h5M8 13h8v4H8zM4 15h3M15 0v7M12 3h6" stroke="#555" strokeWidth="1.300" /></Svg></IconBtn>
      <Sep className="ml-auto mr-[6px]" />
      <button type="button" aria-label="列表视图" className="flex h-[27px] w-[27px] items-center justify-center rounded-sm border border-[#3c66b8] bg-[#f0f4ff]"><Svg w={18} h={18}><path d="M1 1h16v16H1z" fill="url(#pale)" stroke="#8a9ad0" /><path d="M4 6h10M4 9h10M4 12h10" stroke="#4c5aa8" strokeWidth="1.500" strokeDasharray="2.500 1" /></Svg></button>
      <IconBtn label="同步" className="ml-[6px]"><Svg><path d="M1 6h12v13H1z" fill="#fff" stroke="#444" /><path d="M1 6h12v3H1z" fill="#222" /><path d="M3 12h8M3 15h8" stroke="#d05020" strokeWidth="1.500" strokeDasharray="2 1" /><path d="M8 3c5-3 9 0 8 5h3l-4 5-5-5h3c0-3-1-4-5-5z" fill="#2f9a2c" stroke="#17601a" strokeWidth=".6" /></Svg></IconBtn>
    </div>
    <div className="h-[26px] shrink-0 bg-[#c0c0c0]" />
    <Tree />
    <div className="h-1 shrink-0 bg-[#1d2233]" />
    <SectionHead title="详细视图" />
    <div className="h-[31px] shrink-0 border-b border-[#777]" />
    <div className="h-[35px] shrink-0 bg-[#ededed]" />
    <table className="w-full table-fixed border-collapse bg-[#ededed] text-[15px] leading-5 text-[#222]">
      <colgroup><col className="w-6" /><col /><col className="w-[99px]" /><col className="w-[33px]" /></colgroup>
      <thead>
        <tr className="h-6 bg-linear-to-b from-[#e4e8ec] to-[#ccd2d8] text-left">
          <th className="border-r border-[#a8a8a8]" /><th className="border-r border-[#a8a8a8] pl-1 font-normal">名称</th><th className="border-r border-[#a8a8a8] pl-1 font-normal">偏移量</th><th className="pl-1 font-normal">...</th>
        </tr>
      </thead>
      <tbody>
        <tr className="h-6 border-y border-white bg-[#d3d8dc]">
          <td><Svg w={22} h={16}><path d="M1 8l7-6h13v12H8z" fill="#2c94c8" stroke="#0c5484" /><path d="M10 5h8v6h-8z" fill="#d4ecf8" /><path d="M12 6.500h2v3h-2zM16 6v4" stroke="#0c3c64" /></Svg></td>
          <td className="pl-7 outline-1 -outline-offset-2 outline-dotted outline-[#888]">A</td><td /><td className="pl-[5px] text-[14px] text-[#444]">Int</td>
        </tr>
        {[0, 1, 2].map((i) => <tr key={i} className="h-6 border-b border-white"><td colSpan={4} /></tr>)}
      </tbody>
    </table>
    <div className="h-[15px] shrink-0 bg-[#ededed]" />
    <div className="flex h-[22px] shrink-0 items-center bg-[#c0c0c0]">
      <ScrollBtn d="left" label="向左滚动" /><Thumb className="ml-[3px] w-[239px]" /><div className="ml-auto"><ScrollBtn d="right" label="向右滚动" /></div>
    </div>
  </aside>
);

/* ---------- center ---------- */
const Crumb = ({ children }: Kids) => <a href="#crumb" className="whitespace-nowrap">{children}</a>;

const WorkHeader = () => (
  <div className="flex h-[30px] shrink-0 items-center bg-[#2b334b] pl-[6px] pr-[7px] text-[18px] leading-6 text-white">
    <nav className="flex items-center gap-[11px] font-medium" aria-label="路径">
      <Crumb>入门</Crumb><Tri d="right" c="#fff" /><Crumb><span className="text-[16px] font-bold text-[#dde0e8]">HMI [KTP700 Basic PN]</span></Crumb><Tri d="right" c="#fff" /><Crumb><b>画面</b></Crumb><Tri d="right" c="#fff" /><Crumb><b className="font-bold">图形<span className="font-normal">IO</span>域</b></Crumb>
    </nav>
    <div className="ml-auto flex items-center gap-2">
      <IconBtn label="最小化"><Svg w={15} h={15}><path d="M0 10h14v4H0z" fill="#fff" /></Svg></IconBtn>
      <IconBtn label="浮动"><PopIcon /></IconBtn>
      <IconBtn label="最大化"><Svg w={15} h={15}><path d="M0 0h15v2H0zM0 4h15v10H0z" fill="#fff" /></Svg></IconBtn>
      <IconBtn label="关闭"><Svg w={14} h={14}><path d="M1 1l12 12M13 1L1 13" stroke="#fff" strokeWidth="2.800" /></Svg></IconBtn>
    </div>
  </div>
);

const Pair = ({ label, off, children }: Kids & { label: string; off?: boolean }) => (
  <div className="flex items-center gap-1"><IconBtn label={label}>{children}</IconBtn><IconBtn label={`${label}选项`}><DropArrow off={off} /></IconBtn></div>
);

const FormatBar = () => (
  <div className="flex h-[34px] shrink-0 items-center border-t border-[#888] bg-[#e9e9e9] pl-[7px] text-[#14144c]">
    <div className="flex h-[22px] shrink-0 border border-[#999] bg-white">
      <input aria-label="字体" defaultValue="宋体" className="w-[118px] bg-white text-[15px] leading-5 text-black outline-none" />
      <button type="button" aria-label="字体列表" className="flex w-5 items-center justify-center border-l border-[#999] bg-linear-to-b from-[#f0f0f8] to-[#c8cce0]"><Svg w={12} h={14}><path d="M1 1h10v12H1z" fill="#fff" stroke="#7c88c8" /><path d="M3 4h2M3 7h2M3 10h2M6 4h4M6 7h4M6 10h4" stroke="#14144c" strokeWidth="1.500" /></Svg></button>
    </div>
    <div className="ml-[10px] flex h-6 shrink-0 items-center border border-dotted border-[#456] bg-white px-[2px]">
      <input id="size" aria-label="字号" defaultValue="32" className="h-5 w-[22px] bg-[#3465cc] text-center text-[15px] leading-5 text-white outline-none" />
      <button type="button" aria-label="字号列表" className="ml-[3px] flex h-5 w-5 items-center justify-center border border-[#6aa0bc] bg-linear-to-b from-[#c8e8f6] to-[#7cc0e0]"><Svg w={10} h={6}><path d="M0 0h10L5 6z" fill="#000" /></Svg></button>
    </div>
    <div className="ml-[9px] flex items-center gap-[10px] text-[18px] leading-5">
      <button type="button" aria-label="粗体" className="w-5 font-bold">B</button>
      <button type="button" aria-label="斜体" className="w-5 font-['Liberation_Serif',serif] text-[19px] font-bold italic">I</button>
      <button type="button" aria-label="下划线" className="w-5 font-bold underline">U</button>
      <button type="button" aria-label="删除线" className="w-5 font-semibold text-[#666] line-through">S</button>
    </div>
    <div className="ml-2 flex items-center gap-[9px]"><Pair label="字体大小"><GrowIcon /></Pair><Pair label="对齐"><AlignIcon /></Pair></div>
    <Sep className="mx-[7px]" />
    <div className="flex items-center gap-[9px]"><Pair label="字体颜色"><FontColorIcon /></Pair><Pair label="填充颜色"><FillIcon /></Pair><Pair label="线条颜色"><BrushIcon /></Pair></div>
    <Sep className="ml-[7px] mr-2" />
    <div className="flex items-center gap-[9px]"><Pair label="线宽"><LineWIcon /></Pair><Pair label="线型"><DashIcon /></Pair></div>
    <Sep className="mx-[7px]" />
    <div className="flex items-center gap-[9px]"><Pair label="图层顺序"><LayerIcon /></Pair><Pair label="旋转" off><RotateIcon /></Pair><Pair label="对齐方式"><AlignVIcon /></Pair><Pair label="间距" off><SpaceIcon /></Pair><Pair label="大小" off><SizeIcon /></Pair></div>
    <Sep className="ml-[6px] mr-2" />
    <div className="flex items-center gap-[9px]"><IconBtn label="格式刷"><PainterIcon /></IconBtn><Pair label="Tab 顺序"><OrderIcon /></Pair><IconBtn label="缩放选区"><ZoomSelIcon /></IconBtn></div>
  </div>
);

/* Descending staircase edge of the enlarged bitmap arrow. */
const steps = 35;
const sw = 374, sh = 110, half = sw / 2;
const stair = (() => {
  const l: string[] = [], r: string[] = [];
  for (let i = 0; i < steps; i++) {
    const inset = Math.round((i * (half - 5)) / (steps - 1));
    const y0 = Math.round((i * sh) / steps), y1 = Math.round(((i + 1) * sh) / steps);
    l.unshift(`${inset},${y1} ${inset},${y0}`);
    r.push(`${sw - inset},${y0} ${sw - inset},${y1}`);
  }
  return [...r, ...l].join(' ');
})();

const handles = ['left-[-1px] top-[-1px]', 'left-[56px] top-[-1px]', 'left-[112px] top-[-1px]', 'left-[-1px] top-[16px]', 'left-[112px] top-[16px]', 'left-[-1px] top-[33px]', 'left-[56px] top-[33px]'];

const Canvas = () => (
  <div className="flex min-h-0 flex-1">
    <div className="relative min-w-0 flex-1 overflow-hidden bg-[#728196]">
      <div className="absolute left-[66px] top-0 h-full w-[1000px] bg-[#b2b2b2] bg-[conic-gradient(from_270deg_at_2px_1px,#454545_90deg,transparent_0)] bg-[size:10px_10px] bg-[position:0px_3px]" />
      <div className="absolute left-[1066px] top-0 h-[180px] w-[33px] overflow-hidden bg-[#b0b0b0]">
        <span className="absolute bottom-1 left-1 text-[48px] font-bold leading-none text-[#728196] [writing-mode:vertical-rl]">TOUCH</span>
      </div>
      <div className="absolute left-[312px] top-[31px] h-[305px] w-[518px] border-2 border-b-white border-l-[#808080] border-r-white border-t-[#808080] bg-[#d3d3d4]">
        <svg width={sw} height={sh} viewBox={`0 0 ${sw} ${sh}`} shapeRendering="crispEdges" className="absolute left-[69px] top-[96px]"><polygon points={stair} fill="#000" /></svg>
      </div>
      <div className="absolute left-[422px] top-[396px] h-[39px] w-[119px] border-4 border-[#5a5a60] bg-white">
        <input aria-label="IO 域" defaultValue="0000000" className="h-full w-full bg-transparent pl-1 text-[19px] font-semibold leading-6 text-[#3c3c44] outline-none" />
        {handles.map((h) => <span key={h} className={clsx('absolute -ml-1 -mt-1 size-[7px] border border-[#3c74c0] bg-[#cfe6ff]', h)} />)}
        <span className="absolute -bottom-1 -right-1 size-[7px] bg-white" />
      </div>
      <svg width="12" height="19" viewBox="0 0 12 19" className="absolute left-[179px] top-[142px]"><path d="M.500.500v16l4-4 2.500 6 2.500-1-2.500-6h5z" fill="#fff" stroke="#000" /></svg>
    </div>
    <div className="flex w-[22px] shrink-0 flex-col items-center bg-[#c0c0c0]">
      <ScrollBtn d="up" label="向上滚动" /><Thumb v className="mt-[118px] h-[242px]" /><div className="mt-auto"><ScrollBtn d="down" label="向下滚动" /></div>
    </div>
  </div>
);

const ZoomRow = () => (
  <div className="flex h-6 shrink-0 items-center bg-[#e8e8e8]">
    <div className="flex h-full flex-1 items-center bg-[#c0c0c0]"><ScrollBtn d="left" label="向左滚动" /><Thumb className="ml-[57px] w-[598px]" /><div className="ml-auto"><ScrollBtn d="right" label="向右滚动" /></div></div>
    <Select id="zoom" label="缩放" value="100%" className="ml-[8px] w-[195px]" />
    <div className="ml-[21px] flex w-[85px] flex-col justify-center">
      <input type="range" aria-label="缩放级别" min={0} max={100} defaultValue={33} className="h-[11px] w-full appearance-none bg-[linear-gradient(#777,#777)] bg-[size:100%_1px] bg-[position:0_5px] bg-no-repeat [&::-webkit-slider-thumb]:h-[11px] [&::-webkit-slider-thumb]:w-[9px] [&::-webkit-slider-thumb]:appearance-none [&::-webkit-slider-thumb]:rounded-b-md [&::-webkit-slider-thumb]:border [&::-webkit-slider-thumb]:border-[#888] [&::-webkit-slider-thumb]:bg-[#c8c8c8]" />
      <span className="mt-px h-1 w-full bg-[repeating-linear-gradient(90deg,#222_0_2px,transparent_2px_6px)]" />
    </div>
    <div className="ml-[18px] flex h-full w-[22px] items-center justify-center bg-white"><Svg w={16} h={14}><path d="M4 1h11v12H4z" fill="#b4c0f8" stroke="#14146c" strokeWidth="1.600" /><path d="M1 4h8v6H1z" fill="#4c74f0" stroke="#1c34a0" /></Svg></div>
  </div>
);

const InfoTab = ({ t, icon, active }: { t: string; icon: React.ReactNode; active?: boolean }) => (
  <button type="button" className={clsx('flex h-[26px] w-[95px] items-center gap-1 border border-b-0 border-[#888] pl-[2px] text-[18px] leading-6', active ? 'bg-[#ededed] font-bold text-black' : 'bg-linear-to-b from-[#dcdcdc] to-[#cacaca] font-medium text-[#555]')}>{icon}{t}</button>
);
const SubTab = ({ t, active, className }: { t: string; active?: boolean; className: string }) => (
  <button type="button" className={clsx('border border-b-0 border-[#888] pr-3 text-[18px] leading-6', active ? '-mb-px h-7 bg-[#ededed] font-bold text-black' : 'h-[26px] bg-linear-to-b from-[#dedede] to-[#cccccc] font-medium text-[#555]', className)}>{t}</button>
);

const CENTERED_PUNCT = "font-['Open_Sans','Noto_Sans_CJK_TC',sans-serif] [text-spacing-trim:space-all]";

type Msg = { pad: string; tri?: boolean; t: string; time: string; kind?: 'head' | 'sel' };
const msgs: Msg[] = [
  { pad: 'pl-[5px]', tri: true, t: '开始下载到设备。', time: '22:09:55', kind: 'head' },
  { pad: 'pl-[28px]', tri: true, t: 'PLC', time: '22:09:55' },
  { pad: 'pl-[51px]', t: "'DB_图形IO域' 下载成功。", time: '22:09:58' },
  { pad: 'pl-[5px]', t: '下载完成（错误：0；警告：0）。', time: '22:09:59', kind: 'sel' },
];

const Messages = () => (
  <div className="flex shrink-0">
    <table className="w-full table-fixed border-collapse bg-[#ededed] text-[15px] leading-5 text-[#222]">
      <colgroup><col className="w-[35px]" /><col /><col className="w-16" /><col className="w-[62px]" /><col className="w-[90px]" /><col className="w-[190px]" /></colgroup>
      <thead>
        <tr className="h-[23px] border-y border-[#999] bg-linear-to-b from-[#e6e6e6] via-[#cfcfcf] to-[#e0e0e0] text-left text-[#222] [&>th]:border-r [&>th]:border-[#aaa] [&>th]:pl-[5px] [&>th]:font-normal">
          <th className="text-[#777]">!</th><th>消息</th><th>转至</th><th>?</th><th>日期</th><th>时间</th>
        </tr>
      </thead>
      <tbody>
        {msgs.map((m) => (
          <tr key={m.t} className={clsx('h-6 border-b border-white', m.kind === 'head' && 'bg-[#dedede]', m.kind === 'sel' && 'bg-[#d3d8dc]')}>
            <td className={clsx('pl-[7px]', m.kind === 'sel' && 'outline-1 -outline-offset-1 outline-dotted outline-[#888]')}><CheckIcon /></td>
            <td><span className={clsx('flex items-center whitespace-nowrap', m.pad)}><span className="w-6 shrink-0">{m.tri && <Tri d="down" />}</span><span className={CENTERED_PUNCT}>{m.t}</span></span></td>
            <td /><td /><td className="pl-[5px] text-[14px] text-[#333]">2020/6/19</td><td className="pl-[5px] text-[14px] text-[#333]">{m.time}</td>
          </tr>
        ))}
      </tbody>
    </table>
    <div className="flex w-[22px] shrink-0 flex-col items-center bg-[#c8c8c8]">
      <div className="mb-[2px] h-6 w-full border-y border-[#999] bg-[#dadada]" />
      <ScrollBtn d="up" label="向上滚动" /><Thumb v className="mt-auto h-[20px]" /><div className="mt-[3px]"><ScrollBtn d="down" label="向下滚动" /></div>
    </div>
  </div>
);

const Center = () => (
  <main className="flex min-w-0 flex-1 flex-col border-l-4 border-r-[3px] border-[#1d2233] bg-[#cacaca]">
    <WorkHeader />
    <div className="h-1 shrink-0 bg-[#ededed]" />
    <div className="h-[31px] shrink-0" />
    <FormatBar />
    <Canvas />
    <ZoomRow />
    <div className="h-[3px] shrink-0 bg-[#1d2233]" />
    <div className="flex h-[31px] shrink-0 justify-end bg-linear-to-b from-[#a9a9a9] to-[#b6b6b6] pr-[7px]">
      <div className="flex h-full items-start border-b-4 border-[#ededed] pl-1 pr-[18px] pt-px">
        <InfoTab t="属性" icon={<PropIcon />} /><InfoTab t="信息" icon={<InfoDocIcon />} active /><InfoTab t="诊断" icon={<DiagIcon />} />
      </div>
      <div className="ml-1 flex items-center gap-2"><PopIcon /><Svg w={15} h={15}><path d="M0 1h15v13H0z" fill="#e0e0e0" /><path d="M0 5h15M0 9h15" stroke="#999" strokeWidth="1.500" /></Svg><Svg w={15} h={9}><path d="M0 0h15L7.500 9z" fill="#fff" /></Svg></div>
    </div>
    <div className="flex h-[30px] shrink-0 items-end gap-[3px] border-b border-[#888] pl-[7px]">
      <SubTab t="常规" active className="w-[78px]" /><SubTab t="交叉引用" className="w-[118px]" /><SubTab t="编译" className="w-[78px]" />
    </div>
    <div className="flex h-[35px] shrink-0 items-center bg-[#e8e8e8] pl-[5px]">
      {[{ l: '错误', i: <ErrIcon /> }, { l: '警告', i: <WarnIcon /> }, { l: '信息', i: <InfoIcon /> }].map((b) => (
        <button key={b.l} type="button" aria-label={b.l} className="mr-[3px] flex size-[27px] items-center justify-center rounded-xs border border-[#4c78c0] bg-[#f4f6fa]">{b.i}</button>
      ))}
      <Select id="filter" label="消息筛选" value="显示所有消息" className="ml-[3px] w-[250px]" />
    </div>
    <div className="h-[25px] shrink-0 bg-[#ededed]" />
    <Messages />
    <div className="flex h-[24px] shrink-0 items-end bg-[#c0c0c0] pb-px">
      <ScrollBtn d="left" label="向左滚动" /><Thumb className="ml-[2px] mr-[9px] flex-1" /><ScrollBtn d="right" label="向右滚动" /><span className="w-[24px]" />
    </div>
  </main>
);

/* ---------- toolbox ---------- */
const Palette = ({ items, className }: { items: { name: string; art: React.ReactNode }[]; className?: string }) => (
  <div className={clsx('bg-[#ededed] pr-[10px] pt-[7px]', className)}>
    <div className="grid grid-cols-7">
      {items.map((i) => <button key={i.name} type="button" aria-label={i.name} className="flex justify-center">{i.art}</button>)}
    </div>
  </div>
);
const Bar = () => <div className="h-[3px] shrink-0 bg-[#a0a0a0]" />;

const Toolbox = () => (
  <aside className="flex w-[376px] shrink-0 flex-col bg-[#ededed]">
    <div className="flex h-[30px] shrink-0 items-center bg-linear-to-b from-[#a4a4a4] to-[#b4b4b4] pl-2 pr-[10px] text-[19px] font-medium leading-6 text-white">
      <h2>工具箱</h2><div className="ml-auto flex items-center gap-[10px]"><PopIcon /><PaneIcon /><PaneArrow d="right" /></div>
    </div>
    <h3 className="h-[35px] shrink-0 border-b border-[#777] bg-linear-to-b from-[#e4e4e4] via-[#f0f0f0] to-[#cccccc] pl-2 text-[19px] font-bold leading-9 text-black">选项</h3>
    <div className="flex h-[35px] shrink-0 items-center bg-[#ededed] pl-2 pr-[7px]">
      <IconBtn label="选择" className="ml-1"><Svg><path d="M3 1v15l4-3 3 6 3-1-3-6h5z" fill="#14144c" /></Svg></IconBtn>
      <IconBtn label="图章" className="ml-[9px]"><Svg><circle cx="10" cy="5" r="4.500" fill="url(#gold)" stroke="#94700c" /><path d="M8 9h4v4h6v4H2v-4h6zM1 18h18v2H1z" fill="#b08c1c" /></Svg></IconBtn>
      <IconBtn label="设置" className="ml-[9px]"><Svg><path d="M1 3h9v16H1z" fill="#d8d8d8" stroke="#888" /><path d="M3 7h4v3H3zM3 13h4v3H3z" stroke="#777" /><path d="M11 1c0 5 1 6 2 6v12h4V7c2-1 2-4 2-6l-2 1v3h-4V2z" fill="#7c7c7c" /></Svg></IconBtn>
      <IconBtn label="列表" className="ml-[9px]"><Svg><path d="M1 1h18v18H1z" fill="#e8f0fc" stroke="#3c5ca0" /><path d="M1 1h18v4H1z" fill="#1c4890" /><path d="M4 8h4M11 8h6M4 11h4M11 11h6M4 14h4M11 14h6M4 17h4M11 17h6" stroke="#3c64b0" strokeWidth="1.500" /></Svg></IconBtn>
      <Select id="style" label="样式" value="深色默认值" className="ml-[9px] w-[150px]" />
      <IconBtn label="窗格" className="ml-auto"><Svg w={19} h={19}><path d="M1 1h17v17H1z" fill="#f6f8ff" stroke="#6c7cc8" /><path d="M1 3h17M1 16h17" stroke="#5060b8" strokeWidth="2" /><path d="M4 5h11v9H4z" fill="#fff" stroke="#b0b8e0" /></Svg></IconBtn>
    </div>
    <Bar /><SectionHead title="基本对象" /><Palette items={shapes} className="h-[119px] shrink-0" />
    <Bar /><SectionHead title="元素" /><Palette items={elements} className="h-[188px] shrink-0" />
    <Bar /><SectionHead title="控件" /><Palette items={controls} className="flex-1" />
    <Bar /><SectionHead title="图形" closed />
  </aside>
);

const sideTabs: { t: string; icon: React.ReactNode; cls: string }[] = [
  { t: '工具箱', cls: 'h-[112px] bg-[#ededed] font-bold text-black', icon: <Svg><circle cx="12" cy="8" r="8" fill="url(#blue)" stroke="#5a6cc0" /><path d="M1 19L6 6l5 13M3 15h6" stroke="#101040" strokeWidth="2" /></Svg> },
  { t: '动画', cls: 'h-[92px]', icon: <Svg><path d="M11 1h8v6h-8z" fill="#3cb0b8" /><path d="M1 13h8v6H1z" fill="#b01cd8" /><path d="M5 12V9h9V8" stroke="#14144c" strokeWidth="2" /></Svg> },
  { t: '布局', cls: 'h-[92px]', icon: <Svg><path d="M3 3h17M3 7h17M3 11h17M3 15h17" stroke="#222c70" strokeWidth="1.500" strokeDasharray="1.500 2.500" /><path d="M1 9l4-3h8l-3 3zM1 14l4-4h8l-3 4zM1 19l4-4h8l-3 4z" fill="#ecc050" stroke="#a47c18" /></Svg> },
  { t: '指令', cls: 'h-[92px]', icon: <Svg><path d="M1 8h13v11H1z" fill="#e0ecff" stroke="#4c84b8" /><path d="M4 11h3v5H4zM10.500 10.500v6" stroke="#14144c" strokeWidth="1.500" /><path d="M10 0v11M5 5.500h11M6 2l8 7M14 2L6 9" stroke="#d81cb8" strokeWidth="1.300" /><path d="M12 10l7 7" stroke="#333" strokeWidth="2.400" /></Svg> },
  { t: '任务', cls: 'h-[92px]', icon: <Svg><path d="M1 3h15v15H1z" fill="#fff8e0" stroke="#8c7434" /><path d="M5 1h7v4H5z" fill="#888" /><path d="M4 8h8M4 11h8M4 14h6" stroke="#242c80" strokeWidth="1.500" /><path d="M9 14l4 4 7-8" stroke="#149428" strokeWidth="3" /></Svg> },
  { t: '库', cls: 'h-[72px]', icon: <Svg><path d="M1 3h8l1 1 1-1h8v13h-8l-1 1-1-1H1z" fill="#f0f4ff" stroke="#14146c" strokeWidth="1.600" /><path d="M10 4v13" stroke="#5c6cc0" /></Svg> },
];

const SideTabs = () => (
  <nav aria-label="任务卡" className="flex w-[31px] shrink-0 flex-col gap-[3px] border-l border-[#1d2233] bg-[#a8a8a8] pt-[38px]">
    {sideTabs.map((s) => (
      <button key={s.t} type="button" className={clsx('flex w-[25px] flex-col items-center gap-[6px] overflow-hidden border border-l-0 border-[#777] pt-[2px]', s.cls, s.t !== '工具箱' && 'bg-[#dadada] font-medium text-[#555]')}>
        {s.icon}<span className="text-[17px] leading-5 [text-orientation:sideways] [writing-mode:vertical-rl]">{s.t}</span>
      </button>
    ))}
  </nav>
);

/* ---------- bottom bars ---------- */
const EditorTab = ({ t, icon, active }: { t: string; icon: React.ReactNode; active?: boolean }) => (
  <button type="button" className={clsx('flex h-[26px] w-[141px] items-center gap-[6px] whitespace-nowrap pl-1 text-[16px] leading-5', active ? 'bg-white font-bold text-black' : 'bg-[#c3c0c3] text-[#222]')}>{icon}{t}</button>
);

const PortalBar = () => (
  <div className="flex h-[37px] shrink-0 items-center bg-[#1a1a1a] text-white">
    <button type="button" className="flex w-[227px] items-center gap-3 pl-[43px] text-[17px] font-semibold leading-6"><PaneArrow d="left" /><span>Portal 视图</span></button>
    <div className="flex gap-1">
      <EditorTab t="总览" icon={<Svg><path d="M1 1h18v18H1z" fill="#eef2fa" stroke="#3c5488" /><path d="M1 1h18v3H1z" fill="#1c3c78" /><path d="M7 4v15M1 8h5M1 12h5M1 16h5" stroke="#3c5488" /><path d="M9 6h3v4H9zM14 6h3v4h-3zM9 13h3v4H9zM14 13h3v4h-3z" fill="#6a4a2a" /></Svg>} />
      <EditorTab active t="图形IO域" icon={<Svg><path d="M1 2h18v16H1z" fill="url(#pale)" stroke="#2c4480" strokeWidth="1.500" /></Svg>} />
      <EditorTab t="文本和图形..." icon={<Svg><path d="M1 1h18v18H1z" fill="#f0f2fc" stroke="#8c98d0" /><circle cx="13" cy="6" r="3.500" fill="url(#sun)" /><path d="M9 18l4-6 5 6z" fill="#1c38b0" /><path d="M4 3v5M2.500 12H6l-3 5h3.500" stroke="#14144c" strokeWidth="1.300" /></Svg>} />
      <EditorTab t="DB_图形IO..." icon={<DbIcon />} />
    </div>
    <div className="ml-auto flex h-full items-center">
      <IconBtn label="消息窗口"><Svg w={25} h={24}><path d="M0 0h25v24H0z" fill="#c8c6d4" /><path d="M4 4h8v8H4z" fill="#fff" /><path d="M4 7h8M4 10h8" stroke="#888" /><path d="M16 5v5h5v5M13 8l3-4 3 4" stroke="#14144c" strokeWidth="1.600" /><path d="M3 17h19v4H3z" fill="#14144c" /><path d="M5 19h4M11 19h4M17 19h3" stroke="#fff" strokeWidth="1.600" /></Svg></IconBtn>
      <div className="ml-2 flex h-full w-[412px] items-center border-l border-[#444] pl-1 pr-12 text-[16px] leading-5 text-[#e8e8e8]">
        <CheckIcon /><span className={clsx('ml-[5px]', CENTERED_PUNCT)}>下载完成（错误：0；警告：0）。</span>
        <div className="ml-auto flex gap-px">{[0, 1, 2, 3, 4, 5, 6].map((i) => <span key={i} className={clsx('h-[15px] w-1', i === 2 ? 'bg-white' : 'bg-[#e4541c]')} />)}</div>
      </div>
    </div>
  </div>
);

const AppBtn = ({ label, run, active, children }: Kids & { label: string; run?: boolean; active?: boolean }) => (
  <button type="button" aria-label={label} className={clsx('flex h-full w-[62px] flex-col items-center', active && 'bg-[#3c3f44]')}>
    <span className="flex flex-1 items-center">{children}</span>
    <span className={clsx('h-[3px]', active ? 'w-full' : 'w-[50px]', run && 'bg-[#7ab0e0]')} />
  </button>
);
const Wordmark = ({ a, b }: { a: string; b: string }) => (
  <span className="flex flex-col text-[15px] font-bold leading-[17px] text-[#e4ecf4]"><span>{a}</span><span className="text-[#98b0d0]">{b}</span></span>
);

const Taskbar = () => (
  <footer className="flex h-[50px] shrink-0 items-stretch bg-[#0c0c0c] text-white">
    <button type="button" aria-label="开始" className="flex w-[60px] items-center justify-center"><Svg><path d="M0 3l9-1.300V9.500H0zM10 1.500L20 0v9.500H10zM0 10.500h9v7.800L0 17zM10 10.500h10V20l-10-1.500z" fill="#fff" /></Svg></button>
    <div className="flex w-[430px] items-center bg-[#f0f0f0] pl-[11px] pr-[17px]">
      <Svg w={28} h={28}><circle cx="14" cy="14" r="11.500" stroke="#000" strokeWidth="3.200" /></Svg>
      <input aria-label="搜索" placeholder="在这里输入你要搜索的内容" className="ml-[11px] min-w-0 flex-1 bg-transparent text-[19px] leading-6 outline-none placeholder:text-[#444]" />
      <Svg w={16} h={22}><rect x="5" y="1" width="6" height="12" rx="1" stroke="#222" strokeWidth="1.400" /><path d="M1.500 10v3.500c0 4 13 4 13 0V10M8 17v4M5 21h6" stroke="#222" strokeWidth="1.400" /></Svg>
    </div>
    <div className="flex">
      <AppBtn label="任务视图"><Svg w={22} h={22}><path d="M1 1v3h13V1M1 21v-3h13v3M1 7h13v8H1zM18 1v20" stroke="#fff" strokeWidth="1.400" /><path d="M17 6h3v4h-3z" fill="#fff" /></Svg></AppBtn>
      <AppBtn label="文件资源管理器" run><Svg w={28} h={26}><path d="M0 1h11l2 3h15v20H0z" fill="#f8d878" /><path d="M0 6h28v18H0z" fill="#fce69c" /><path d="M5 14h18v11h-5v-5h-8v5H5z" fill="#3ca4d8" /></Svg></AppBtn>
      <AppBtn label="Edge"><Svg w={26} h={26}><path d="M2 12C3 4 8 0 14 0c7 0 11 5 11 12v3H9c0 6 8 7 14 4v5c-9 4-19 1-19-8 0-5 3-8 7-10-2 2-2 3-2 5h9c0-7-11-7-16 1z" fill="#1c8ce0" /></Svg></AppBtn>
      <AppBtn label="PLCSIM" run><Wordmark a="PLC" b="SIM" /></AppBtn>
      <AppBtn label="Chrome" run><Svg w={28} h={28}><circle cx="14" cy="14" r="13" fill="#f4c41c" /><path d="M2.700 7.500A13 13 0 0 1 25.300 7.500H14L8 17z" fill="#dc4030" /><path d="M2.700 7.500A13 13 0 0 0 13 27l6-10-5 3-6-3z" fill="#2ca04c" /><circle cx="14" cy="14" r="6" fill="#fff" /><circle cx="14" cy="14" r="4.800" fill="#3c78e0" /></Svg></AppBtn>
      <AppBtn label="TIA Portal V15" run active><Wordmark a="TIA" b="V15" /></AppBtn>
      <AppBtn label="OBS" run><Svg w={28} h={28}><circle cx="14" cy="14" r="12.500" fill="#1c1c20" stroke="#e4e4e4" strokeWidth="1.600" /><path d="M13 5c-4 3-3 8 2 9M22 12c-4-3-8 0-7 4M8 19c4 3 9 0 7-4" stroke="#e4e4e4" strokeWidth="2.200" /></Svg></AppBtn>
    </div>
    <div className="ml-auto flex items-center pr-[5px]">
      <Svg><circle cx="13" cy="4" r="3" stroke="#fff" strokeWidth="1.400" /><path d="M8 12c1-6 9-6 10 0" stroke="#fff" strokeWidth="1.400" /><circle cx="6" cy="11" r="3" stroke="#fff" strokeWidth="1.400" /><path d="M1 19c1-6 9-6 10 0" stroke="#fff" strokeWidth="1.400" /></Svg>
      <div className="ml-[26px] flex items-center gap-[10px]">
        <Svg w={18} h={18}><path d="M1 13l8-8 8 8" stroke="#fff" strokeWidth="1.500" /></Svg>
        <Svg w={20} h={14}><path d="M5 13a4 4 0 0 1-1-8c2-5 8-5 10-1 4 0 6 4 5 7 0 1-2 2-3 2z" fill="#f4f4f4" /><path d="M5 5c3-6 9-4 9 0-3 0-4 2-5 4z" fill="#aaa" /></Svg>
        <Svg w={20} h={14}><path d="M2 0v3M5 0v3M1 3h5v2c0 2-5 2-5 0zM3.500 7v5H6" stroke="#fff" strokeWidth="1.300" /><path d="M8 2h10v10H6" stroke="#fff" strokeWidth="1.400" /><path d="M8 4h8v6H7z" fill="#fff" /><path d="M19 5v4" stroke="#fff" strokeWidth="1.500" /></Svg>
        <Svg w={18} h={18}><path d="M1 16C1 8 8 1 16 1M5 16C5 10 10 5 16 5M9 16c0-4 3-7 7-7" stroke="#ddd" strokeWidth="1.300" /><circle cx="14.500" cy="15" r="2" fill="#fff" /></Svg>
        <Svg w={20} h={16}><path d="M1 5h3l4-4v14l-4-4H1z" stroke="#fff" strokeWidth="1.300" /><path d="M11 5c1 2 1 4 0 6M14 3c2 3 2 7 0 10" stroke="#fff" strokeWidth="1.300" /><path d="M17 1c3 4 3 10 0 14" stroke="#888" strokeWidth="1.300" /></Svg>
        <span className="text-[17px] leading-5">中</span>
      </div>
      <time className="ml-[14px] w-[76px] whitespace-nowrap text-center text-[15px] leading-[23px]">22:10<br />2020/6/19</time>
      <div className="ml-6 mr-4 w-[30px]"><Svg w={30} h={32}><path d="M0 3h20v15h-8l-6 5v-5H0z" fill="#fff" /><path d="M4 7h12M4 10h12M4 13h8" stroke="#111" strokeWidth="1.300" /><circle cx="20" cy="22" r="9.500" fill="#3c3c3c" stroke="#8c8c8c" /><text x="20" y="27" textAnchor="middle" fill="#fff" fontSize="14" fontWeight="700">5</text></Svg></div>
      <span className="h-full border-l border-[#555]" />
    </div>
  </footer>
);

export default function App() {
  return (
    <div className="flex h-screen min-w-[1600px] flex-col overflow-hidden bg-[#cacaca] font-['Open_Sans','Noto_Sans_CJK_SC',sans-serif]">
      <Defs />
      <TitleBar />
      <div className="flex h-[63px] shrink-0 items-center border-b border-[#444a58]">
        <div className="min-w-0 flex-1 self-start"><MenuBar /><MainToolbar /></div>
        <div className="shrink-0 pr-[30px] pt-[5px] text-right">
          <p className="pr-[30px] text-[17px] font-semibold leading-5 text-[#2c2c2c]">Totally Integrated Automation</p>
          <p className="text-[20px] font-bold leading-5 text-[#707070]">PORTAL</p>
        </div>
      </div>
      <div className="flex min-h-0 flex-1">
        <nav aria-label="视图" className="flex w-[30px] shrink-0 flex-col border-r border-[#3a4050] bg-[#b0b0b0]">
          <div className="h-[31px] border-b border-white" />
          <button type="button" className="flex h-[277px] items-center justify-center border-b border-white text-[19px] font-medium leading-6 text-white"><span className="rotate-180 [text-orientation:sideways] [writing-mode:vertical-rl]">可视化</span></button>
        </nav>
        <LeftPane />
        <Center />
        <Toolbox />
        <SideTabs />
      </div>
      <PortalBar />
      <Taskbar />
    </div>
  );
}
